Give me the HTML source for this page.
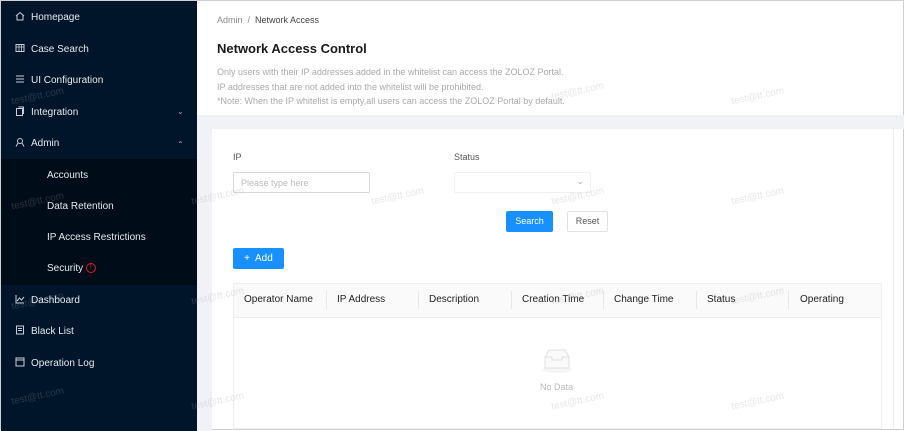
<!DOCTYPE html>
<html><head><meta charset="utf-8"><style>
*{margin:0;padding:0;box-sizing:border-box}
body{width:904px;height:430px;overflow:hidden;font-family:"Liberation Sans",sans-serif;background:#fff;position:relative;border:1px solid #d0d0d0}
.sb{position:absolute;left:0;top:0;width:196px;height:430px;background:#001529}
.sub{position:absolute;left:0;top:158px;width:196px;height:126px;background:#000c17}
.it{position:absolute;left:30px;font-size:10px;color:#e6e9ee;line-height:12px}
.ic{position:absolute;left:14px;width:10px;height:10px}
.si{position:absolute;left:46px;font-size:10px;color:#e6e9ee;line-height:12px}
.ar{position:absolute;left:176px;font-size:8px;color:#aab}
.t{position:absolute;white-space:nowrap}
.wm{position:absolute;font-size:10px;color:rgba(160,160,170,.25);transform:rotate(-12deg);white-space:nowrap}
.th{position:absolute;top:293px;font-size:10px;color:#222}
.sep{position:absolute;top:290px;width:1px;height:18px;background:#e8e8e8}
</style></head><body>
<div class="sb">
<div class="sub"></div>
<svg class="ic" style="top:10px" viewBox="0 0 10 10"><path d="M1 5L5 1.5 9 5M2 4.5V9h6V4.5" fill="none" stroke="#ccd" stroke-width="1"/></svg>
<div class="it" style="top:11px">Homepage</div>
<svg class="ic" style="top:42px" viewBox="0 0 10 10"><rect x="1" y="1.5" width="8" height="7" fill="none" stroke="#ccd"/><path d="M1 4h8M4 1.5v7M6.5 1.5v7" stroke="#ccd" stroke-width=".8"/></svg>
<div class="it" style="top:43px">Case Search</div>
<svg class="ic" style="top:73px" viewBox="0 0 10 10"><path d="M1 2h8M1 5h8M1 8h8" stroke="#ccd"/></svg>
<div class="it" style="top:74px">UI Configuration</div>
<svg class="ic" style="top:105px" viewBox="0 0 10 10"><rect x="1.5" y="2.5" width="6" height="7" fill="none" stroke="#ccd"/><path d="M3.5 1h5v7" fill="none" stroke="#ccd"/></svg>
<div class="it" style="top:106px">Integration</div><div class="ar" style="top:106px">&#8964;</div>
<svg class="ic" style="top:136px" viewBox="0 0 10 10"><circle cx="5" cy="4" r="2.5" fill="none" stroke="#ccd"/><path d="M1 9.5L3 6M9 9.5L7 6" stroke="#ccd"/></svg>
<div class="it" style="top:137px">Admin</div><div class="ar" style="top:139px">&#8963;</div>
<div class="si" style="top:169px">Accounts</div>
<div class="si" style="top:200px">Data Retention</div>
<div class="si" style="top:231px">IP Access Restrictions</div>
<div class="si" style="top:262px">Security <span style="display:inline-block;width:10px;height:10px;border:1px solid #e02020;border-radius:50%;font-size:7px;line-height:8px;text-align:center;color:#e02020;vertical-align:top">!</span></div>
<svg class="ic" style="top:293px" viewBox="0 0 10 10"><path d="M1 1v8h8M2 7l2.5-3 2 2L9 3" fill="none" stroke="#ccd"/></svg>
<div class="it" style="top:294px">Dashboard</div>
<svg class="ic" style="top:324px" viewBox="0 0 10 10"><rect x="1.5" y="1" width="7" height="8" fill="none" stroke="#ccd"/><path d="M3 3.5h4M3 5.5h4" stroke="#ccd"/></svg>
<div class="it" style="top:325px">Black List</div>
<svg class="ic" style="top:356px" viewBox="0 0 10 10"><rect x="1" y="1" width="8" height="8" fill="none" stroke="#ccd"/><path d="M1 3h8" stroke="#ccd"/></svg>
<div class="it" style="top:357px">Operation Log</div>
</div>
<div style="position:absolute;left:196px;top:114px;width:707px;height:14px;background:#f0f2f5"></div>
<div style="position:absolute;left:196px;top:114px;width:15px;height:316px;background:#f0f2f5"></div>
<div style="position:absolute;left:892px;top:128px;width:1px;height:300px;background:#eee"></div>
<div class="t" style="left:216px;top:14px;font-size:9px;color:#888">Admin &nbsp;/ &nbsp;<span style="color:#444">Network Access</span></div>
<div class="t" style="left:216px;top:40px;font-size:13px;font-weight:bold;color:#1a1a1a">Network Access Control</div>
<div class="t" style="left:216px;top:64px;font-size:9px;color:#aaa;line-height:14.5px">Only users with their IP addresses added in the whitelist can access the ZOLOZ Portal.<br>IP addresses that are not added into the whitelist will be prohibited.<br>*Note: When the IP whitelist is empty,all users can access the ZOLOZ Portal by default.</div>
<div class="t" style="left:232px;top:151px;font-size:9px;color:#555">IP</div>
<div class="t" style="left:453px;top:151px;font-size:9px;color:#555">Status</div>
<div style="position:absolute;left:232px;top:171px;width:137px;height:21px;border:1px solid #d9d9d9;border-radius:2px;font-size:9px;color:#bbb;padding:5px 7px">Please type here</div>
<div style="position:absolute;left:453px;top:171px;width:137px;height:21px;border:1px solid #f0f0f0;border-radius:2px"><span style="position:absolute;right:6px;top:3px;font-size:9px;color:#aaa">&#8964;</span></div>
<div style="position:absolute;left:505px;top:210px;width:47px;height:21px;background:#1890ff;border-radius:2px;color:#fff;font-size:9px;text-align:center;line-height:21px">Search</div>
<div style="position:absolute;left:566px;top:210px;width:41px;height:21px;border:1px solid #e3e3e3;border-radius:2px;color:#555;font-size:9px;text-align:center;line-height:19px">Reset</div>
<div style="position:absolute;left:232px;top:247px;width:51px;height:21px;background:#1890ff;border-radius:2px;color:#fff;font-size:10px;text-align:center;line-height:21px">+&nbsp; Add</div>
<div style="position:absolute;left:232px;top:282px;width:649px;height:146px;border:1px solid #eee;border-radius:2px"></div>
<div style="position:absolute;left:233px;top:283px;width:647px;height:34px;background:#fafafa;border-bottom:1px solid #eee"></div>
<div class="sep" style="left:325px"></div><div class="sep" style="left:417px"></div><div class="sep" style="left:510px"></div><div class="sep" style="left:602px"></div><div class="sep" style="left:695px"></div><div class="sep" style="left:787px"></div>
<div class="th" style="left:243px">Operator Name</div><div class="th" style="left:336px">IP Address</div><div class="th" style="left:428px">Description</div><div class="th" style="left:521px">Creation Time</div><div class="th" style="left:613px">Change Time</div><div class="th" style="left:706px">Status</div><div class="th" style="left:799px">Operating</div>
<svg style="position:absolute;left:539px;top:346px" width="34" height="28" viewBox="0 0 34 28"><ellipse cx="17" cy="23" rx="15" ry="3" fill="#f5f5f5"/><path d="M5 10l4-7h16l4 7v11H5z" fill="#fafafa" stroke="#e0e0e0"/><path d="M5 10h7v3h10v-3h7" fill="none" stroke="#e0e0e0"/></svg>
<div class="t" style="left:539px;top:381px;font-size:9px;color:#bbb">No Data</div>
<div class="wm" style="left:10px;top:90px">test@tt.com</div>
<div class="wm" style="left:10px;top:195px">test@tt.com</div>
<div class="wm" style="left:10px;top:295px">test@tt.com</div>
<div class="wm" style="left:10px;top:390px">test@tt.com</div>
<div class="wm" style="left:370px;top:190px">test@tt.com</div>
<div class="wm" style="left:550px;top:85px">test@tt.com</div>
<div class="wm" style="left:550px;top:190px">test@tt.com</div>
<div class="wm" style="left:550px;top:290px">test@tt.com</div>
<div class="wm" style="left:550px;top:395px">test@tt.com</div>
<div class="wm" style="left:730px;top:90px">test@tt.com</div>
<div class="wm" style="left:730px;top:190px">test@tt.com</div>
<div class="wm" style="left:730px;top:290px">test@tt.com</div>
<div class="wm" style="left:730px;top:395px">test@tt.com</div>
<div class="wm" style="left:190px;top:190px">test@tt.com</div>
<div class="wm" style="left:190px;top:290px">test@tt.com</div>
<div class="wm" style="left:190px;top:395px">test@tt.com</div>
</body></html>
